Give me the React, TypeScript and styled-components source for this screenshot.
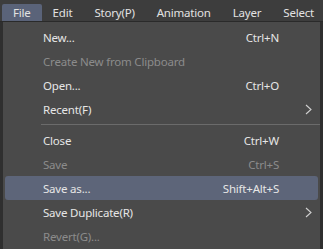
import React from "react";
import styled, { createGlobalStyle } from "styled-components";

const GlobalStyle = createGlobalStyle`
  html, body {
    margin: 0;
    padding: 0;
    background: #2f2f2f;
    width: 323px;
    height: 249px;
    overflow: hidden;
  }
`;

const Screen = styled.div`
  width: 323px;
  height: 249px;
  font-family: "Noto Sans", "Open Sans", sans-serif;
  font-size: 11.5px;
  letter-spacing: -0.2px;
  color: #e4e4e4;
  display: flex;
  flex-direction: column;
`;

const MenuBar = styled.div`
  height: 21px;
  background: #3d3d3d;
  border-bottom: 1px solid #2a2a2a;
  display: flex;
  align-items: flex-end;
  padding-left: 2px;
`;

const BarItem = styled.div<{ $open?: boolean }>`
  height: 17px;
  line-height: 17px;
  padding: 0 11px;
  border-radius: 2px 2px 0 0;
  background: ${(p) => (p.$open ? "#5a6379" : "transparent")};
  color: #e2e2e2;
`;

const Dropdown = styled.div`
  margin: 0 3px;
  flex: 1;
  background: #4a4a4a;
  padding-top: 3px;
`;

const Item = styled.div<{ $disabled?: boolean; $active?: boolean }>`
  height: 24px;
  margin: 0 2px;
  border-radius: 3px;
  display: grid;
  grid-template-columns: 1fr auto 39px;
  align-items: center;
  padding-left: 38px;
  color: ${(p) => (p.$disabled ? "#8c8c8c" : "#e6e6e6")};
  background: ${(p) => (p.$active ? "#5d6579" : "transparent")};
`;

const Shortcut = styled.span`
  text-align: right;
`;

const Arrow = styled.span`
  display: flex;
  justify-content: flex-end;
  padding-right: 6px;
`;

const Separator = styled.div`
  height: 7px;
  display: flex;
  align-items: center;
  padding-left: 38px;
  &::after {
    content: "";
    flex: 1;
    height: 1px;
    background: #6b6b6b;
  }
`;

const Chevron = () => (
  <svg width="7" height="11" viewBox="0 0 7 11">
    <path d="M1 1 L6 5.5 L1 10" fill="none" stroke="#d0d0d0" strokeWidth="1.1" />
  </svg>
);

type Entry =
  | { sep: true }
  | { label: string; shortcut?: string; disabled?: boolean; sub?: boolean; active?: boolean };

const entries: Entry[] = [
  { label: "New...", shortcut: "Ctrl+N" },
  { label: "Create New from Clipboard", disabled: true },
  { label: "Open...", shortcut: "Ctrl+O" },
  { label: "Recent(F)", sub: true },
  { sep: true },
  { label: "Close", shortcut: "Ctrl+W" },
  { label: "Save", shortcut: "Ctrl+S", disabled: true },
  { label: "Save as...", shortcut: "Shift+Alt+S", active: true },
  { label: "Save Duplicate(R)", sub: true },
  { label: "Revert(G)...", disabled: true },
];

export default function App() {
  return (
    <Screen>
      <GlobalStyle />
      <MenuBar>
        <BarItem $open>File</BarItem>
        <BarItem>Edit</BarItem>
        <BarItem>Story(P)</BarItem>
        <BarItem>Animation</BarItem>
        <BarItem>Layer</BarItem>
        <BarItem>Select</BarItem>
      </MenuBar>
      <Dropdown>
        {entries.map((e, i) =>
          "sep" in e ? (
            <Separator key={i} />
          ) : (
            <Item key={i} $disabled={e.disabled} $active={e.active}>
              <span>{e.label}</span>
              <Shortcut>{e.shortcut}</Shortcut>
              <Arrow>{e.sub ? <Chevron /> : null}</Arrow>
            </Item>
          )
        )}
      </Dropdown>
    </Screen>
  );
}
